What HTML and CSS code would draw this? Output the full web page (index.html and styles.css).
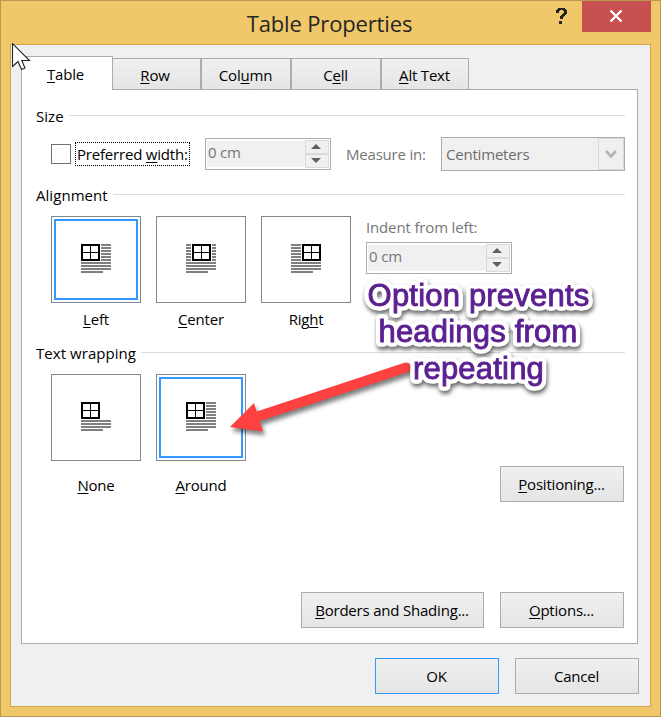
FILE: index.html
```html
<!DOCTYPE html>
<html lang="en">
<head>
<meta charset="utf-8">
<title>Table Properties</title>
<link rel="stylesheet" href="styles.css">
</head>
<body>
<svg width="0" height="0" class="defs">
  <defs>
    <g id="grid" shape-rendering="crispEdges">
      <path d="M0 0h19v17h-19z" fill="#000"/>
      <path d="M2 2h7v6h-7zM10 2h7v6h-7zM2 9h7v6h-7zM10 9h7v6h-7z" fill="#fff"/>
    </g>
    <path id="lines" d="M0 18h30v2h-30zM0 21h30v2h-30zM0 24h30v2h-30zM0 27h22v2h-22z" fill="#808080"/>
    <path id="side" d="M0 0h10v2h-10zM0 3h10v2h-10zM0 6h10v2h-10zM0 9h10v2h-10zM0 12h10v2h-10zM0 15h10v2h-10z" fill="#808080"/>
  </defs>
</svg>
<div class="window">
  <header class="titlebar">
    <h1>Table Properties</h1>
    <svg class="help" width="12" height="16" viewBox="0 0 12 16" shape-rendering="crispEdges"><path d="M2 0h8v1h1v1h1v4h-1v1h-1v1h-1v1h-1v2h-3v-3h1v-1h1v-1h1v-1h1v-2h-1v-1h-3v1h-1v2h-3v-3h1v-1h1zM4 13h3v3h-3z" fill="#232323"/></svg>
    <button class="close"><svg width="14" height="12" viewBox="0 0 14 12"><path d="M1.500 .5l11 11M12.500 .5l-11 11" stroke="#fff" stroke-width="2.300"/></svg></button>
  </header>
  <main class="client">
    <nav class="tabs">
      <div class="tab active"><span><u>T</u>able</span></div>
      <div class="tab row"><span><u>R</u>ow</span></div>
      <div class="tab"><span>Col<u>u</u>mn</span></div>
      <div class="tab"><span>C<u>e</u>ll</span></div>
      <div class="tab alt"><span><u>A</u>lt Text</span></div>
    </nav>
    <section class="panel">
      <div class="heading"><span>Size</span></div>
      <div class="size">
        <i class="check"></i>
        <span class="focus">Preferred <u>w</u>idth:</span>
        <div class="spin"><span class="field">0 cm</span><span class="steps"><i class="up"></i><i class="down"></i></span></div>
        <span class="measure">Measure in:</span>
        <div class="combo"><span>Centimeters</span><i><svg width="12" height="9" viewBox="0 0 12 9"><path d="M1 1l5 5.500l5-5.500" fill="none" stroke="#b6b6b6" stroke-width="2.800"/></svg></i></div>
      </div>
      <div class="heading align"><span>Alignment</span></div>
      <div class="choices">
        <div class="choice selected"><div class="box"><svg width="30" height="29"><use href="#side" x="20"/><use href="#lines"/><use href="#grid"/></svg></div><span><u>L</u>eft</span></div>
        <div class="choice"><div class="box"><svg width="30" height="29"><use href="#side" x="-5"/><use href="#side" x="26"/><use href="#lines"/><use href="#grid" x="6"/></svg></div><span><u>C</u>enter</span></div>
        <div class="choice"><div class="box"><svg width="30" height="29"><use href="#side"/><use href="#lines"/><use href="#grid" x="11"/></svg></div><span>Rig<u>h</u>t</span></div>
        <div class="indent"><span>Indent from left:</span><div class="spin wide"><span class="field">0 cm</span><span class="steps"><i class="up"></i><i class="down"></i></span></div></div>
      </div>
      <div class="heading wrapping"><span>Text wrapping</span></div>
      <div class="choices wraps">
        <div class="choice"><div class="box"><svg width="30" height="29"><use href="#lines"/><use href="#grid"/></svg></div><span><u>N</u>one</span></div>
        <div class="choice selected"><div class="box"><svg width="30" height="29"><use href="#side" x="20"/><use href="#lines"/><use href="#grid"/></svg></div><span><u>A</u>round</span></div>
        <button class="btn positioning"><span><u>P</u>ositioning...</span></button>
      </div>
      <div class="actions">
        <button class="btn borders"><span><u>B</u>orders and Shading...</span></button>
        <button class="btn"><span><u>O</u>ptions...</span></button>
      </div>
    </section>
    <footer>
      <button class="btn ok">OK</button>
      <button class="btn">Cancel</button>
    </footer>
  </main>
  <svg class="note" width="661" height="717" viewBox="0 0 661 717">
    <g class="arrow"><path d="M256 417L406 367.500" stroke="#fd4040" stroke-width="10" stroke-linecap="round"/><path d="M230 427L254 403L263 431.500z" fill="#fd4040"/></g>
    <g class="caption" text-anchor="middle">
      <text x="478.500" y="306">Option prevents</text>
      <text x="478" y="342">headings from</text>
      <text x="478.500" y="378.500">repeating</text>
    </g>
  </svg>
  <svg class="cursor" width="20" height="29" viewBox="0 0 20 29"><path d="M.5 .7V23.500L6 18.500L9.500 26.500L13 25L9.800 17.500H17.500Z" fill="#fff" stroke="#20242c" stroke-width="1.100"/></svg>
</div>
</body>
</html>
```

FILE: styles.css
```css
* { box-sizing: border-box; }
body { margin: 0; font: 15px/20px "Open Sans", "Noto Sans", sans-serif; letter-spacing: -0.2px; color: #000; }
.defs { position: absolute; }
u { text-decoration: underline; text-decoration-thickness: 1px; text-underline-offset: 2px; text-decoration-skip-ink: none; }
button { font: inherit; letter-spacing: inherit; color: inherit; padding: 0; }
.window { position: relative; width: 661px; height: 717px; background: #f0c869; border: 1px solid #ba9850; padding: 0 9px; }
.titlebar { height: 43px; position: relative; }
h1 { margin: 0; padding: 7px 2px 0 0; font-weight: 400; font-size: 22px; line-height: 30px; text-align: center; color: #262626; letter-spacing: -0.15px; }
.help { position: absolute; left: 545px; top: 7px; }
.close { position: absolute; left: 572px; top: 0; width: 69px; height: 31px; border: 0; background: #c75050; display: flex; align-items: center; justify-content: center; padding: 0 2px 1px 0; }
.client { width: 641px; height: 663px; border: 1px solid #d0a649; background: #f0f0f0; padding: 11px 10px 0; }
.tabs { display: flex; align-items: flex-end; height: 34px; margin-bottom: -1px; }
.tab { width: 90px; height: 32px; border: 1px solid #acacac; background: linear-gradient(#f0f0f0, #e5e5e5); display: flex; justify-content: center; padding: 6px 1px 0 0; }
.tab.active { width: 92px; height: 34px; background: #fff; border-bottom: 0; padding: 7px 3px 0 0; }
.tab.row { width: 88px; border-left: 0; padding-right: 3px; }
.tab.alt { width: 88px; }
.panel { width: 617px; height: 555px; border: 1px solid #acacac; background: #fff; padding: 16px 12px 0 14px; }
.heading { display: flex; align-items: flex-start; height: 20px; gap: 5px; letter-spacing: 0.05px; }
.heading::after { content: ""; height: 1px; flex: 1; background: #dcdcdc; margin-top: 9px; }
.size { display: flex; align-items: center; height: 34px; margin-top: 11px; padding-left: 15px; }
.check { width: 20px; height: 20px; border: 1px solid #707070; margin: -1px 4px 0 0; }
.focus { width: 115px; height: 24px; border: 1px dotted #000; padding: 1px 0 0 1px; white-space: nowrap; margin-right: 15px; }
.spin { display: flex; width: 126px; height: 32px; border: 1px solid #acacac; padding: 1px; background: #fff; color: #767676; }
.field { flex: 1; background: #f0f0f0; margin: 1px 0; padding: 0 0 0 1px; line-height: 23px; }
.steps { width: 24px; display: flex; flex-direction: column; }
.steps i { height: 14px; flex: none; border: 1px solid #dadada; background: #f0f0f0; display: flex; align-items: center; justify-content: center; padding-right: 2px; padding-bottom: 2px; }
.steps i::before { content: ""; border: 5px solid transparent; border-top: 0; border-bottom: 5px solid #606060; }
.steps .down::before { border-bottom: 0; border-top: 5px solid #606060; }
.measure { color: #767676; width: 95px; margin-left: 15px; }
.combo { width: 184px; height: 34px; border: 1px solid #acacac; background: #f0f0f0; color: #6d6d6d; display: flex; justify-content: space-between; line-height: 32px; padding-left: 4px; }
.combo i { width: 26px; border: 1px solid #dadada; display: flex; align-items: center; justify-content: center; }
.align { margin-top: 14px; }
.choices { display: flex; gap: 15px; padding-left: 15px; margin-top: 11px; }
.choice { width: 90px; text-align: center; }
.box { width: 90px; height: 87px; border: 1px solid #828790; position: relative; padding: 27px 0 0 29px; margin-bottom: 6px; text-align: left; }
.box svg { display: block; }
.selected .box::after { content: ""; position: absolute; inset: 2px; border: 2px solid #3399ff; }
.indent { color: #767676; padding-top: 1px; letter-spacing: -0.15px; }
.indent .spin { width: 146px; margin-top: 5px; }
.wrapping { margin-top: 14px; }
.wraps .box { margin-bottom: 14px; }
.btn { width: 124px; height: 36px; border: 1px solid #acacac; background: linear-gradient(#f0f0f0, #e5e5e5); padding: 0 1px 0 0; }
.positioning { margin: 92px 0 0 239px; }
.actions { display: flex; justify-content: flex-end; gap: 16px; margin: 90px 1px 0 0; }
.borders { width: 183px; }
footer { display: flex; justify-content: flex-end; gap: 16px; padding-top: 14px; margin-right: 1px; }
.ok { border-color: #3399ff; }
.note { position: absolute; left: -1px; top: -1px; pointer-events: none; }
.arrow { filter: drop-shadow(2px 4px 2px rgba(0,0,0,.5)); }
.caption {
  font: 31px "Liberation Sans", sans-serif;
  letter-spacing: 0.2px;
  fill: #5c2090;
  stroke: #5c2090;
  stroke-width: 0.9px;
  filter: drop-shadow(2px 0 0 #fff) drop-shadow(-2px 0 0 #fff) drop-shadow(0 2px 0 #fff) drop-shadow(0 -2px 0 #fff) drop-shadow(1px 1px 0 #fff) drop-shadow(-1px -1px 0 #fff) drop-shadow(1px -1px 0 #fff) drop-shadow(-1px 1px 0 #fff) drop-shadow(1px 3px 2px rgba(0,0,0,.6));
}
.cursor { position: absolute; left: 11px; top: 42px; }
```
